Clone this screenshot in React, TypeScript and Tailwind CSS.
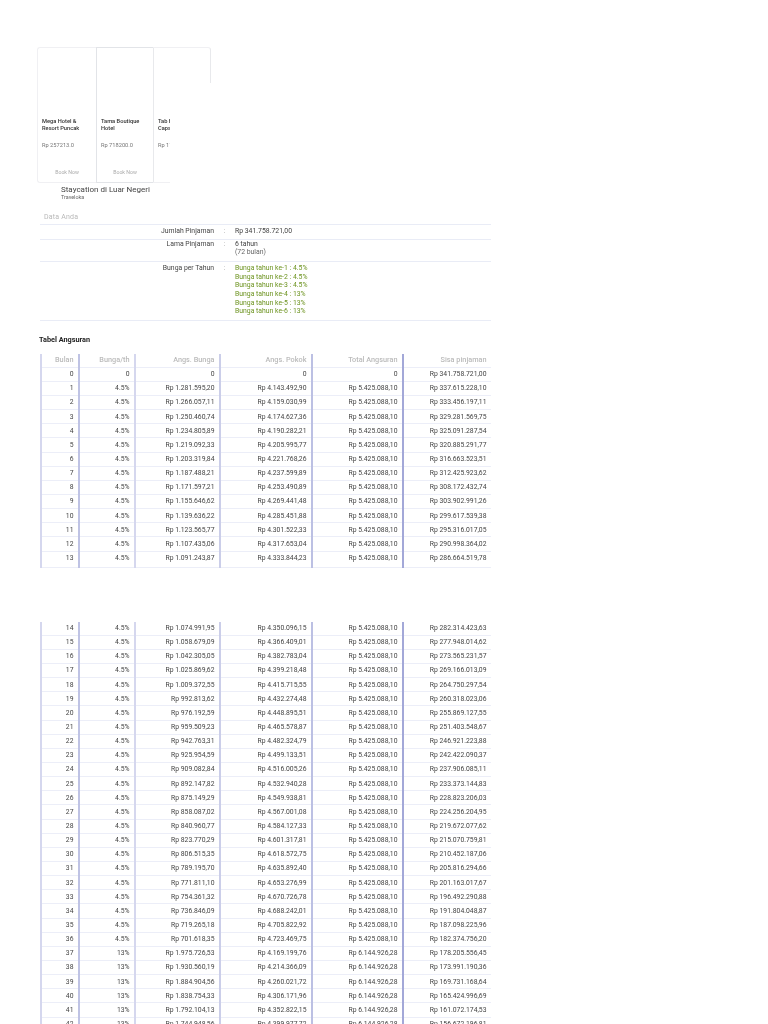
const font = "font-['Roboto',sans-serif]";

// bulan, bunga, angs bunga, angs pokok, total, sisa
type Row = [string, string, string, string, string, string];

const p1 = "Rp 5.425.088,10";
const p2 = "Rp 6.144.926,28";

const rowsA: Row[] = [
  ["0", "0", "0", "0", "0", "Rp 341.758.721,00"],
  ["1", "4.5%", "Rp 1.281.595,20", "Rp 4.143.492,90", p1, "Rp 337.615.228,10"],
  ["2", "4.5%", "Rp 1.266.057,11", "Rp 4.159.030,99", p1, "Rp 333.456.197,11"],
  ["3", "4.5%", "Rp 1.250.460,74", "Rp 4.174.627,36", p1, "Rp 329.281.569,75"],
  ["4", "4.5%", "Rp 1.234.805,89", "Rp 4.190.282,21", p1, "Rp 325.091.287,54"],
  ["5", "4.5%", "Rp 1.219.092,33", "Rp 4.205.995,77", p1, "Rp 320.885.291,77"],
  ["6", "4.5%", "Rp 1.203.319,84", "Rp 4.221.768,26", p1, "Rp 316.663.523,51"],
  ["7", "4.5%", "Rp 1.187.488,21", "Rp 4.237.599,89", p1, "Rp 312.425.923,62"],
  ["8", "4.5%", "Rp 1.171.597,21", "Rp 4.253.490,89", p1, "Rp 308.172.432,74"],
  ["9", "4.5%", "Rp 1.155.646,62", "Rp 4.269.441,48", p1, "Rp 303.902.991,26"],
  ["10", "4.5%", "Rp 1.139.636,22", "Rp 4.285.451,88", p1, "Rp 299.617.539,38"],
  ["11", "4.5%", "Rp 1.123.565,77", "Rp 4.301.522,33", p1, "Rp 295.316.017,05"],
  ["12", "4.5%", "Rp 1.107.435,06", "Rp 4.317.653,04", p1, "Rp 290.998.364,02"],
  ["13", "4.5%", "Rp 1.091.243,87", "Rp 4.333.844,23", p1, "Rp 286.664.519,78"],
];

const rowsB: Row[] = [
  ["14", "4.5%", "Rp 1.074.991,95", "Rp 4.350.096,15", p1, "Rp 282.314.423,63"],
  ["15", "4.5%", "Rp 1.058.679,09", "Rp 4.366.409,01", p1, "Rp 277.948.014,62"],
  ["16", "4.5%", "Rp 1.042.305,05", "Rp 4.382.783,04", p1, "Rp 273.565.231,57"],
  ["17", "4.5%", "Rp 1.025.869,62", "Rp 4.399.218,48", p1, "Rp 269.166.013,09"],
  ["18", "4.5%", "Rp 1.009.372,55", "Rp 4.415.715,55", p1, "Rp 264.750.297,54"],
  ["19", "4.5%", "Rp 992.813,62", "Rp 4.432.274,48", p1, "Rp 260.318.023,06"],
  ["20", "4.5%", "Rp 976.192,59", "Rp 4.448.895,51", p1, "Rp 255.869.127,55"],
  ["21", "4.5%", "Rp 959.509,23", "Rp 4.465.578,87", p1, "Rp 251.403.548,67"],
  ["22", "4.5%", "Rp 942.763,31", "Rp 4.482.324,79", p1, "Rp 246.921.223,88"],
  ["23", "4.5%", "Rp 925.954,59", "Rp 4.499.133,51", p1, "Rp 242.422.090,37"],
  ["24", "4.5%", "Rp 909.082,84", "Rp 4.516.005,26", p1, "Rp 237.906.085,11"],
  ["25", "4.5%", "Rp 892.147,82", "Rp 4.532.940,28", p1, "Rp 233.373.144,83"],
  ["26", "4.5%", "Rp 875.149,29", "Rp 4.549.938,81", p1, "Rp 228.823.206,03"],
  ["27", "4.5%", "Rp 858.087,02", "Rp 4.567.001,08", p1, "Rp 224.256.204,95"],
  ["28", "4.5%", "Rp 840.960,77", "Rp 4.584.127,33", p1, "Rp 219.672.077,62"],
  ["29", "4.5%", "Rp 823.770,29", "Rp 4.601.317,81", p1, "Rp 215.070.759,81"],
  ["30", "4.5%", "Rp 806.515,35", "Rp 4.618.572,75", p1, "Rp 210.452.187,06"],
  ["31", "4.5%", "Rp 789.195,70", "Rp 4.635.892,40", p1, "Rp 205.816.294,66"],
  ["32", "4.5%", "Rp 771.811,10", "Rp 4.653.276,99", p1, "Rp 201.163.017,67"],
  ["33", "4.5%", "Rp 754.361,32", "Rp 4.670.726,78", p1, "Rp 196.492.290,88"],
  ["34", "4.5%", "Rp 736.846,09", "Rp 4.688.242,01", p1, "Rp 191.804.048,87"],
  ["35", "4.5%", "Rp 719.265,18", "Rp 4.705.822,92", p1, "Rp 187.098.225,96"],
  ["36", "4.5%", "Rp 701.618,35", "Rp 4.723.469,75", p1, "Rp 182.374.756,20"],
  ["37", "13%", "Rp 1.975.726,53", "Rp 4.169.199,76", p2, "Rp 178.205.556,45"],
  ["38", "13%", "Rp 1.930.560,19", "Rp 4.214.366,09", p2, "Rp 173.991.190,36"],
  ["39", "13%", "Rp 1.884.904,56", "Rp 4.260.021,72", p2, "Rp 169.731.168,64"],
  ["40", "13%", "Rp 1.838.754,33", "Rp 4.306.171,96", p2, "Rp 165.424.996,69"],
  ["41", "13%", "Rp 1.792.104,13", "Rp 4.352.822,15", p2, "Rp 161.072.174,53"],
  ["42", "13%", "Rp 1.744.948,56", "Rp 4.399.977,72", p2, "Rp 156.672.196,81"],
];

const cols = [
  "w-[38px] border-l-2 border-l-[#d5d7ee]",
  "w-[56px] border-l-2 border-l-[#bfc3e4]",
  "w-[85px] border-l-2 border-l-[#d5d7ee]",
  "w-[92px] border-l-2 border-l-[#cbcee9]",
  "w-[91px] border-l-2 border-l-[#bcc0e3]",
  "w-[89px] border-l-2 border-l-[#a3a8d8]",
];

function TableRow({ row, head, last }: { row: Row; head?: boolean; last?: boolean }) {
  return (
    <div className={`flex ${last ? "h-[16px]" : "h-[14.15px]"}`}>
      {row.map((cell, i) => (
        <div key={i} className={`${cols[i]} flex`}>
          <div
            className={`flex flex-1 items-center justify-end border-b border-b-[#eceef8] pr-[4.5px] ${
              last ? "pb-[2px]" : ""
            } ${head ? "text-[7.3px] font-medium text-[#bbbbbb]" : "text-[#444]"}`}
          >
            {cell}
          </div>
        </div>
      ))}
    </div>
  );
}

function HotelCard({ name, price, className }: { name: string[]; price: string; className: string }) {
  return (
    <div className={`flex h-[136px] flex-col pl-[4px] ${className}`}>
      <div className="mt-[70px] text-[5.7px] leading-[7px] font-medium text-[#333]">
        {name.map((n) => (
          <div key={n}>{n}</div>
        ))}
      </div>
      <div className="mt-[9px] text-[5.7px] text-[#777]">{price}</div>
      <div className="mt-[19px] pr-[4px] text-center text-[5.2px] text-[#aaa]">Book Now</div>
    </div>
  );
}

export default function App() {
  return (
    <div className={`${font} relative h-[1024px] w-[768px] overflow-hidden bg-white pt-[47px] pl-[37px] blur-[0.3px]`}>
      <div className="relative flex h-[136px] w-[174px]">
        <HotelCard
          name={["Mega Hotel &", "Resort Puncak"]}
          price="Rp 257213.0"
          className="w-[59px] rounded-l-[3px] border-y border-l border-[#f0f0f3]"
        />
        <HotelCard
          name={["Tama Boutique", "Hotel"]}
          price="Rp 718200.0"
          className="w-[57px] border-y border-l border-[#e2e4e8]"
        />
        <HotelCard
          name={["Tab Hotel", "Capsule"]}
          price="Rp 119000.0"
          className="w-[58px] rounded-r-[3px] border-y border-x border-x-[#e8e9ec] border-y-[#f0f0f3]"
        />
        {/* next card gets cut off by the white block */}
        <div className="absolute top-[36px] left-[133px] h-[104px] w-[45px] bg-white" />
      </div>

      <div className="mt-[1px] pl-[24px] text-[8px] leading-[11px] text-[#444]">Staycation di Luar Negeri</div>
      <div className="pl-[24px] text-[5.4px] leading-[5px] text-[#666]">Traveloka</div>

      <div className="mt-[12px] pl-[7px] text-[7px] leading-[10px] tracking-[0.2px] text-[#b8b8b8]">Data Anda</div>

      <div className="mt-[1.5px] ml-[3px] w-[451px] border-y border-[#e9ecf6] text-[6.85px]">
        <div className="flex h-[14px] items-center pb-[1.5px] text-[#444]">
          <div className="w-[174px] text-right">Jumlah Pinjaman</div>
          <div className="w-[21px] text-center text-[#aaa]">:</div>
          <div>Rp 341.758.721,00</div>
        </div>
      </div>
      <div className="ml-[3px] w-[451px] border-b border-[#e9ecf6] text-[6.85px]">
        <div className="flex h-[21.5px] pt-[0.5px] text-[#444]">
          <div className="w-[174px] leading-[8px] text-right">Lama Pinjaman</div>
          <div className="w-[21px] text-center leading-[8px] text-[#aaa]">:</div>
          <div className="leading-[8.4px]">
            6 tahun
            <div className="text-[#666]">(72 bulan)</div>
          </div>
        </div>
      </div>
      <div className="ml-[3px] w-[451px] border-b border-[#e9ecf6] text-[6.85px]">
        <div className="flex h-[58px] pt-[2px] text-[#444]">
          <div className="w-[174px] leading-[8.65px] text-right">Bunga per Tahun</div>
          <div className="w-[21px] text-center leading-[8.65px] text-[#aaa]">:</div>
          <div className="leading-[8.65px] text-[#6e9422]">
            <div>Bunga tahun ke-1 : 4.5%</div>
            <div>Bunga tahun ke-2 : 4.5%</div>
            <div>Bunga tahun ke-3 : 4.5%</div>
            <div>Bunga tahun ke-4 : 13%</div>
            <div>Bunga tahun ke-5 : 13%</div>
            <div>Bunga tahun ke-6 : 13%</div>
          </div>
        </div>
      </div>

      <div className="mt-[15px] pl-[2px] text-[7.3px] leading-[8px] font-bold text-[#222]">Tabel Angsuran</div>

      <div className="mt-[9.6px] ml-[3px] w-[451px] text-[6.8px]">
        <TableRow head row={["Bulan", "Bunga/th", "Angs. Bunga", "Angs. Pokok", "Total Angsuran", "Sisa pinjaman"]} />
        {rowsA.map((r, i) => (
          <TableRow key={r[0]} row={r} last={i === rowsA.length - 1} />
        ))}
      </div>

      <div className="mt-[54px] ml-[3px] w-[451px] text-[6.8px]">
        {rowsB.map((r) => (
          <TableRow key={r[0]} row={r} />
        ))}
      </div>
    </div>
  );
}
